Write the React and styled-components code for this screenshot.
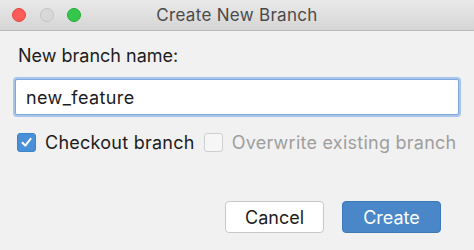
import React from 'react';
import styled, { createGlobalStyle } from 'styled-components';

const GlobalStyle = createGlobalStyle`
  html, body {
    margin: 0;
    padding: 0;
    background: #ffffff;
  }
  body {
    font-family: Inter, "Noto Sans", "Liberation Sans", sans-serif;
    -webkit-font-smoothing: antialiased;
  }
`;

const Window = styled.div`
  width: 474px;
  height: 250px;
  display: flex;
  flex-direction: column;
  background: #f1f1f1;
  box-sizing: border-box;
  overflow: hidden;
`;

const TitleBar = styled.div`
  height: 31px;
  display: grid;
  grid-template-columns: 1fr auto 1fr;
  align-items: center;
  padding: 0 12px;
  background: linear-gradient(#e9e9e9, #d5d5d5);
  border-bottom: 1px solid #b9b9b9;
  box-sizing: border-box;
`;

const Lights = styled.div`
  display: flex;
  gap: 13.5px;
  align-items: center;
`;

const Light = styled.span`
  width: 14px;
  height: 14px;
  border-radius: 50%;
  background: ${({ color }) => color};
  border: 0.5px solid ${({ edge }) => edge};
  box-sizing: border-box;
`;

const Title = styled.div`
  font-size: 17px;
  color: #4a4a4a;
  letter-spacing: 0.3px;
  white-space: nowrap;
`;

const Body = styled.div`
  flex: 1;
  display: flex;
  flex-direction: column;
  padding: 13px 15px 0 15px;
`;

const Label = styled.div`
  font-size: 18px;
  color: #1c1c1c;
  padding-left: 3px;
  line-height: 24px;
`;

const Input = styled.input`
  margin-top: 11px;
  height: 36px;
  width: 444px;
  box-sizing: border-box;
  border: 1px solid #7fa9dc;
  box-shadow: 0 0 0 2px #a8c6ec;
  border-radius: 2px;
  padding: 0 10px;
  font-family: inherit;
  font-size: 18px;
  letter-spacing: 0.4px;
  color: #1c1c1c;
  background: #ffffff;
  outline: none;
`;

const Options = styled.div`
  display: flex;
  align-items: center;
  margin-top: 17px;
  padding-left: 2px;
  white-space: nowrap;
`;

const Option = styled.label`
  display: flex;
  flex-shrink: 0;
  align-items: center;
  gap: 9px;
  font-size: 18px;
  letter-spacing: 0.25px;
  color: ${({ disabled }) => (disabled ? '#9e9e9e' : '#1c1c1c')};
  margin-right: 9px;
`;

const Box = styled.span`
  width: 19px;
  height: 19px;
  flex-shrink: 0;
  box-sizing: border-box;
  border-radius: 3px;
  display: flex;
  align-items: center;
  justify-content: center;
  background: ${({ checked }) => (checked ? '#4a90d9' : '#f6f6f6')};
  border: 1px solid ${({ checked }) => (checked ? '#3f83cc' : '#cfcfcf')};
`;

const Footer = styled.div`
  margin-top: auto;
  display: flex;
  justify-content: flex-end;
  gap: 18px;
  padding: 0 18px 17px 0;
`;

const Button = styled.button`
  width: 99px;
  height: 32px;
  box-sizing: border-box;
  border-radius: 4px;
  font-family: inherit;
  font-size: 18px;
  color: ${({ primary }) => (primary ? '#ffffff' : '#1c1c1c')};
  background: ${({ primary }) => (primary ? '#4a87c9' : '#ffffff')};
  border: 1px solid ${({ primary }) => (primary ? '#3d78b9' : '#c9c9c9')};
  padding: 0;
`;

const Check = () => (
  <svg width="13" height="13" viewBox="0 0 13 13">
    <path d="M2.5 6.8 L5.3 9.6 L10.6 2.8" fill="none" stroke="#ffffff" strokeWidth="2" strokeLinecap="round" strokeLinejoin="round" />
  </svg>
);

const App = () => (
  <>
    <GlobalStyle />
    <Window>
      <TitleBar>
        <Lights>
          <Light color="#fc5b57" edge="#e2463f" />
          <Light color="#d8d8d8" edge="#c4c4c4" />
          <Light color="#34c84a" edge="#23a936" />
        </Lights>
        <Title>Create New Branch</Title>
        <span />
      </TitleBar>
      <Body>
        <Label>New branch name:</Label>
        <Input defaultValue="new_feature" />
        <Options>
          <Option>
            <Box checked><Check /></Box>
            Checkout branch
          </Option>
          <Option disabled>
            <Box />
            Overwrite existing branch
          </Option>
        </Options>
        <Footer>
          <Button>Cancel</Button>
          <Button primary>Create</Button>
        </Footer>
      </Body>
    </Window>
  </>
);

export default App;
